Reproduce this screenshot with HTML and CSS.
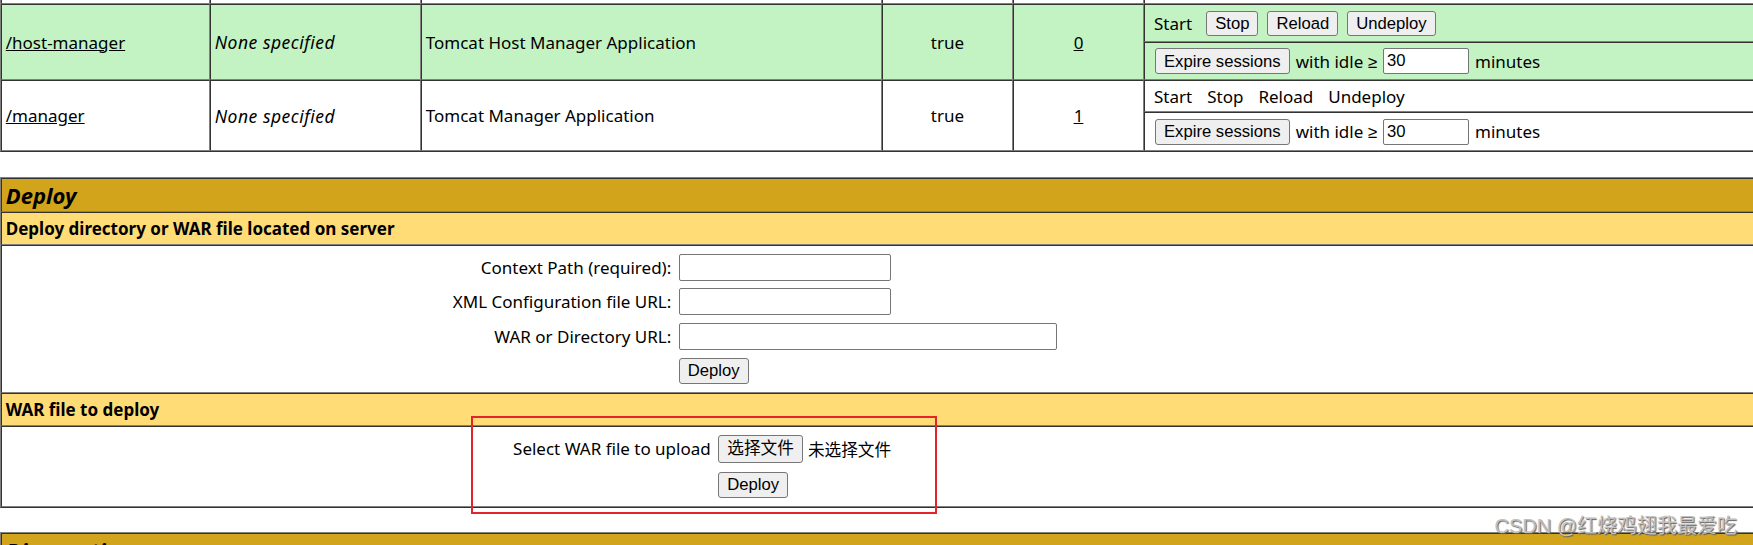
FILE: index.html
```html
<!DOCTYPE html>
<html lang="zh-CN">
<head>
<meta charset="utf-8">
<title>/manager</title>
<link rel="stylesheet" href="styles.css">
</head>
<body>
<main class="page">
  <section class="tbl apps">
    <div class="cell prev k1"></div>
    <div class="cell prev k2"></div>
    <div class="cell prev k3"></div>
    <div class="cell prev k4"></div>
    <div class="cell prev k5"></div>
    <div class="cell prev k6"></div>

    <div class="cell k1 ra green"><a class="lnk" href="#">/host-manager</a></div>
    <div class="cell k2 ra green"><em class="ver">None specified</em></div>
    <div class="cell k3 ra green">Tomcat Host Manager Application</div>
    <div class="cell k4 ra green mid">true</div>
    <div class="cell k5 ra green mid"><a class="lnk" href="#">0</a></div>
    <div class="cell k6 s2 green cmds">
      <span class="cmd-text">Start</span>
      <button class="btn" type="button">Stop</button>
      <button class="btn" type="button">Reload</button>
      <button class="btn" type="button">Undeploy</button>
    </div>
    <div class="cell k6 s3 green expire">
      <button class="btn" type="button">Expire sessions</button>
      <span>with idle <span class="ge">≥</span></span>
      <input class="txt idle" type="text" value="30">
      <span>minutes</span>
    </div>

    <div class="cell k1 rb"><a class="lnk" href="#">/manager</a></div>
    <div class="cell k2 rb"><em class="ver">None specified</em></div>
    <div class="cell k3 rb">Tomcat Manager Application</div>
    <div class="cell k4 rb mid">true</div>
    <div class="cell k5 rb mid"><a class="lnk" href="#">1</a></div>
    <div class="cell k6 s4 plain-cmds">
      <span>Start</span>
      <span>Stop</span>
      <span>Reload</span>
      <span>Undeploy</span>
    </div>
    <div class="cell k6 s5 expire">
      <button class="btn" type="button">Expire sessions</button>
      <span>with idle <span class="ge">≥</span></span>
      <input class="txt idle" type="text" value="30">
      <span>minutes</span>
    </div>
  </section>

  <section class="tbl stack">
    <div class="cell title">Deploy</div>
    <div class="cell header">Deploy directory or WAR file located on server</div>
    <div class="cell formcell server">
      <form class="form-grid server-grid">
        <label class="lab">Context Path (required):</label>
        <div class="ctl"><input class="txt w20" type="text"></div>
        <label class="lab">XML Configuration file URL:</label>
        <div class="ctl"><input class="txt w20" type="text"></div>
        <label class="lab">WAR or Directory URL:</label>
        <div class="ctl"><input class="txt w40" type="text"></div>
        <div class="lab"></div>
        <div class="ctl"><button class="btn" type="button">Deploy</button></div>
      </form>
    </div>
    <div class="cell header">WAR file to deploy</div>
    <div class="cell formcell war">
      <form class="form-grid war-grid">
        <label class="lab">Select WAR file to upload</label>
        <div class="ctl"><button class="btn filebtn" type="button">选择文件</button><span class="nofile">未选择文件</span></div>
        <div class="lab"></div>
        <div class="ctl"><button class="btn" type="button">Deploy</button></div>
      </form>
    </div>
  </section>

  <section class="tbl stack diag">
    <div class="cell title">Diagnostics</div>
  </section>
</main>
<div class="annotation"></div>
<div class="watermark">CSDN @红烧鸡翅我最爱吃</div>
</body>
</html>
```
FILE: styles.css
```css
* { box-sizing: border-box; }
html, body { margin: 0; padding: 0; }
body {
  position: relative;
  height: 545px;
  overflow: hidden;
  background: #fff;
  color: #000;
  font-family: "Noto Sans", "Noto Sans CJK SC", sans-serif;
  font-size: 17px;
}
.page { width: 1800px; }

.tbl {
  border-left: 1px solid #808080;
  border-bottom: 1px solid #333;
}
.cell {
  display: flex;
  align-items: center;
  min-width: 0;
  padding: 0 3.75px;
  border-top: 1px solid #333;
  border-left: 1px solid #333;
  border-right: 1px solid #808080;
  border-bottom: 1px solid #808080;
  white-space: nowrap;
}

/* applications table */
.apps {
  display: grid;
  grid-template-columns: 209px 211px 461px 131px 131px 1fr;
  grid-template-rows: 4px 38px 38px 32px 39px;
}
.prev { grid-row: 1; border-top: none; }
.k1 { grid-column: 1; }
.k2 { grid-column: 2; }
.k3 { grid-column: 3; }
.k4 { grid-column: 4; }
.k5 { grid-column: 5; }
.k6 { grid-column: 6; }
.ra { grid-row: 2 / 4; }
.rb { grid-row: 4 / 6; }
.s2 { grid-row: 2; }
.s3 { grid-row: 3; }
.s4 { grid-row: 4; }
.s5 { grid-row: 5; }
.green { background: #c3f3c3; }
.mid { justify-content: center; }
.lnk { color: #000; text-decoration: underline; }
.ver { font-size: 17.5px; letter-spacing: 0.5px; }
.ge { font-family: "Liberation Sans", Arial, sans-serif; }

.cmds { padding-left: 9px; gap: 9px; }
.cmd-text { margin-right: 5px; }
.plain-cmds { padding-left: 9px; gap: 15px; }
.expire { padding-left: 10px; gap: 6px; }

.btn {
  height: 26px;
  padding: 0 8px;
  border: 1px solid #767676;
  border-radius: 3px;
  background: #efefef;
  color: #000;
  font-family: "Liberation Sans", Arial, "Noto Sans CJK SC", sans-serif;
  font-size: 16.67px;
  line-height: 19px;
}
.cmds .btn { height: 25px; }
.filebtn { height: 28px; }

.txt {
  height: 27px;
  padding: 1px 3px;
  border: 1px solid #767676;
  border-radius: 2px;
  background: #fff;
  color: #000;
  font-family: "Liberation Sans", Arial, sans-serif;
  font-size: 16.67px;
}
.idle { width: 86px; height: 26px; }
.w20 { width: 212px; }
.w40 { width: 378px; }

/* deploy tables */
.stack {
  display: flex;
  flex-direction: column;
  margin-top: 25px;
  border-top: 1px solid #808080;
}
.diag { margin-top: 24px; }
.title {
  height: 34px;
  background: #d2a41c;
  font-size: 22px;
  font-weight: 700;
  font-style: italic;
}
.header {
  height: 33px;
  background: #ffdc75;
  font-weight: 700;
}
.formcell { align-items: flex-start; padding: 3.75px; }
.server { height: 148px; }
.war { height: 81px; }

.form-grid { display: grid; margin: 0; }
.server-grid {
  grid-template-columns: 669.25px auto;
  grid-auto-rows: 34.5px;
}
.war-grid {
  grid-template-columns: 708.75px auto;
  grid-template-rows: 36.25px 35.25px;
}
.lab {
  display: flex;
  align-items: center;
  justify-content: flex-end;
  padding: 0 3.75px;
}
.ctl {
  display: flex;
  align-items: center;
  gap: 5px;
  padding: 0 3.75px;
}
.nofile {
  font-family: "Noto Sans CJK SC", sans-serif;
  font-size: 16.67px;
}

/* overlays on the screenshot */
.annotation {
  position: absolute;
  left: 471px;
  top: 416px;
  width: 466px;
  height: 98px;
  border: 2px solid #e3242b;
}
.watermark {
  position: absolute;
  right: 16px;
  top: 515px;
  font-family: "Liberation Sans", "Noto Sans CJK SC", sans-serif;
  font-size: 20px;
  line-height: 22px;
  color: #c0c0c0;
  text-shadow: 1px 1px 1px #606060;
}
```
